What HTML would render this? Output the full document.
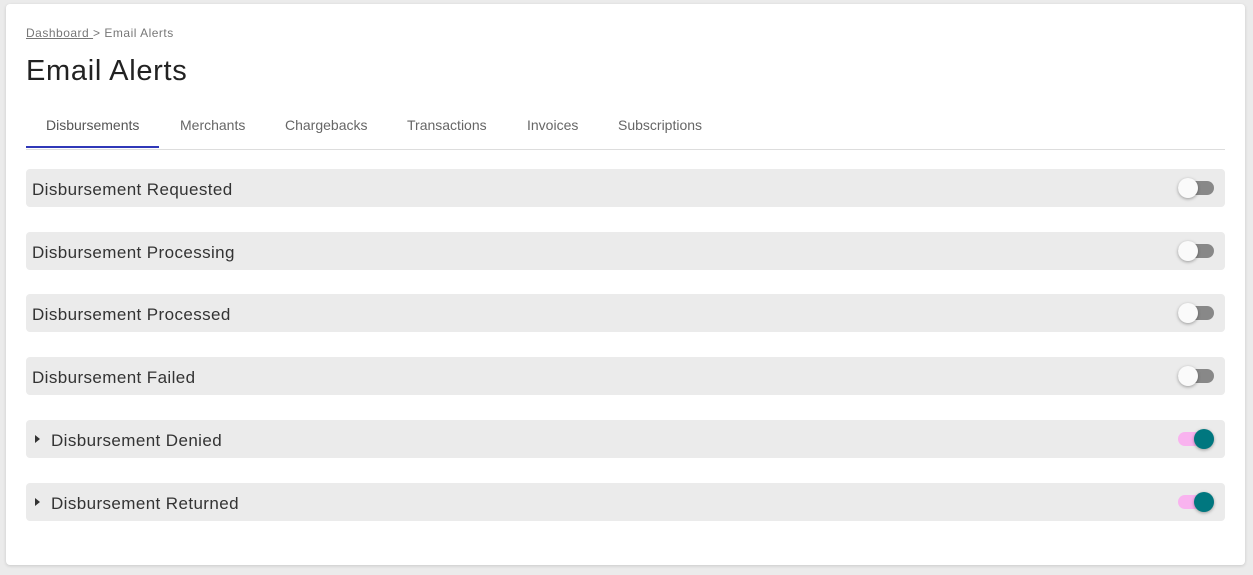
<!DOCTYPE html><html><head><style>
body{margin:0;background:#ebebeb;font-family:"Liberation Sans",sans-serif;}
.card{position:absolute;left:6px;top:4px;width:1239px;height:561px;background:#fff;border-radius:4px;box-shadow:0 1px 3px rgba(0,0,0,.15);}
.bc{position:absolute;left:20px;top:22px;font-size:12px;color:#777;letter-spacing:0.5px;}
.bc u{color:#777}
h1{position:absolute;left:20px;top:51px;margin:0;font-size:29px;font-weight:normal;color:#222;letter-spacing:0.7px;}
.tabs{position:absolute;left:20px;top:104px;width:1199px;height:41px;border-bottom:1px solid #ddd;}
.tab{position:absolute;top:9px;font-size:14px;color:#666;}
.ul{position:absolute;left:0;top:38px;width:133px;height:2px;background:#3038b8;}
.row{position:absolute;left:20px;width:1199px;height:38px;background:#ebebeb;border-radius:4px;}
.row span{position:absolute;left:6px;top:11px;font-size:17px;color:#333;letter-spacing:0.4px;}
.row .c{position:absolute;left:9px;top:15px;width:0;height:0;border-left:5px solid #333;border-top:4px solid transparent;border-bottom:4px solid transparent;}
.tr{position:absolute;left:1152px;top:12px;width:36px;height:14px;border-radius:7px;background:#888;}
.kn{position:absolute;top:9px;width:20px;height:20px;border-radius:50%;background:#fafafa;box-shadow:0 1px 3px rgba(0,0,0,.35);left:1152px;}
.on .tr{background:#f9b3ef}
.on .kn{left:1168px;background:#00777f}
</style></head><body><div class="card">
<div class="bc"><u>Dashboard </u> &gt; Email Alerts</div>
<h1>Email Alerts</h1>
<div class="tabs">
<div class="tab" style="left:20px;color:#555">Disbursements</div>
<div class="tab" style="left:154px">Merchants</div>
<div class="tab" style="left:259px">Chargebacks</div>
<div class="tab" style="left:381px">Transactions</div>
<div class="tab" style="left:501px">Invoices</div>
<div class="tab" style="left:592px">Subscriptions</div>
<div class="ul"></div></div>
<div class="row" style="top:165px"><span>Disbursement Requested</span><div class="tr"></div><div class="kn"></div></div>
<div class="row" style="top:228px"><span>Disbursement Processing</span><div class="tr"></div><div class="kn"></div></div>
<div class="row" style="top:290px"><span>Disbursement Processed</span><div class="tr"></div><div class="kn"></div></div>
<div class="row" style="top:353px"><span>Disbursement Failed</span><div class="tr"></div><div class="kn"></div></div>
<div class="row on" style="top:416px"><i class="c"></i><span style="left:25px">Disbursement Denied</span><div class="tr"></div><div class="kn"></div></div>
<div class="row on" style="top:479px"><i class="c"></i><span style="left:25px">Disbursement Returned</span><div class="tr"></div><div class="kn"></div></div>
</div></body></html>
